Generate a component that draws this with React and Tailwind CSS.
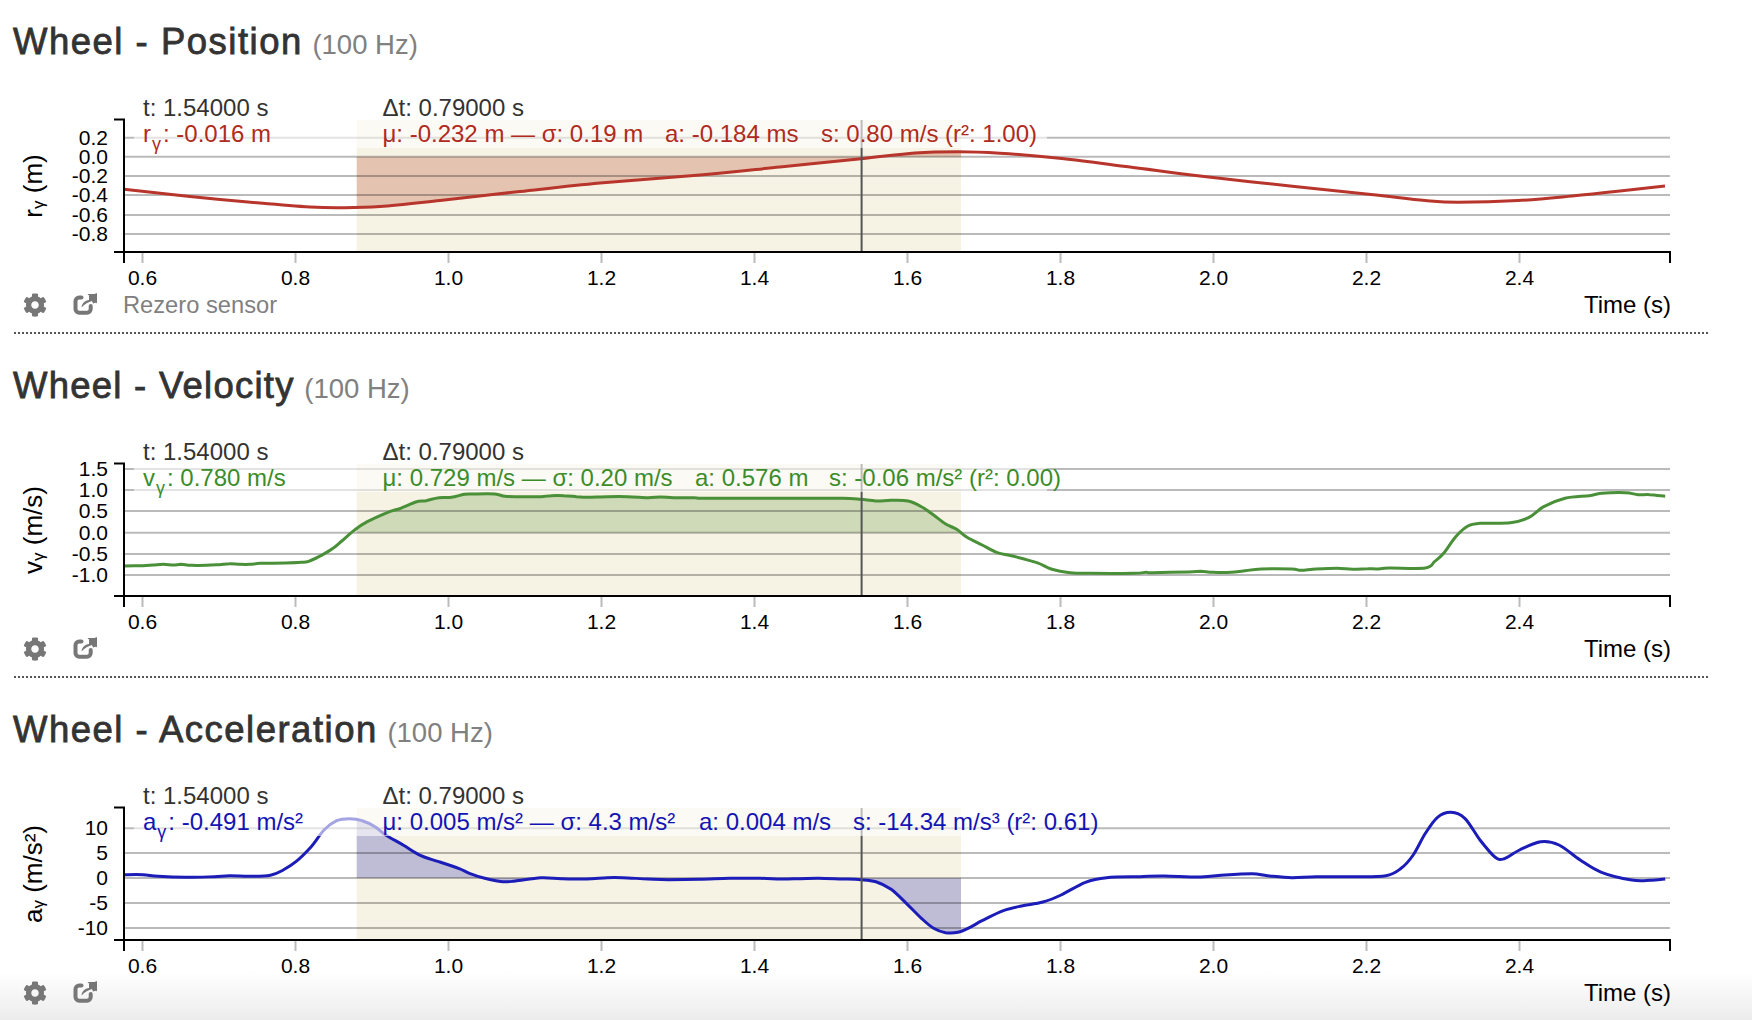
import React from "react";
import { FaCog } from "react-icons/fa";

const X0 = 142.5, PX = 765;
const xOf = (t) => X0 + (t - 0.6) * PX;
const TICKS = ["0.6", "0.8", "1.0", "1.2", "1.4", "1.6", "1.8", "2.0", "2.2", "2.4"];

const z = (list, kx, ox, oy) => list.map(([a, b]) => [ox + a / kx, oy + b / 3]);

const posPts = [
  [124, 189.3], [190, 196.5], [260, 203], [310, 207], [340, 207.8], [380, 206.6], [440, 200.5], [520, 191.5], [600, 183], [700, 175], [780, 167], [861, 158.7], [915, 153], [958, 151.7], [1000, 153.2], [1062, 158.5], [1130, 167], [1200, 176], [1290, 186], [1371, 194.5], [1425, 200.5], [1458, 202.3], [1518, 200.6], [1572, 196], [1620, 191], [1665, 186],
];
const velPts = [
  ...z([[243,678],[280,677],[300,675],[320,673],[340,675],[355,673],[375,676],[405,676],[430,674],[450,671],[470,673],[490,673],[510,670],[560,669],[590,667],[605,664],[625,650],[650,628],[670,603],[695,570],[720,545],[760,517],[785,505],[815,486],[835,482],[860,473],[885,472],[910,463],[930,462],[970,462],[990,469],[1020,470],[1060,470],[1080,467],[1105,467],[1130,470],[1150,472],[1190,470],[1230,470],[1270,473],[1295,471],[1320,473],[1360,473],[1380,475],[1500,475]], 1.96, 0, 340),
  ...z([[0,175],[70,175],[100,178],[125,183],[150,181],[178,183],[200,200],[220,225],[240,252],[258,268],[275,292],[300,315],[325,338],[350,348],[390,368],[415,388],[445,398],[480,400],[550,400],[570,397],[580,398],[640,396],[660,394],[680,397],[710,397],[730,393],[760,387],[810,387],[825,391],[850,387],[885,385],[910,388],[935,386],[950,387],[970,384],[1030,384],[1045,365],[1060,340],[1080,290],[1100,258],[1120,250],[1170,248],[1200,233],[1225,200],[1260,175],[1300,167],[1320,160],[1360,158],[1380,164],[1400,164],[1425,169]], 1.647, 800, 440),
];
const accPts = [
  ...z([[243,584],[280,584],[310,589],[365,592],[420,590],[450,587],[490,589],[530,586],[555,570],[580,545],[610,500],[635,450],[660,422],[685,416],[710,422],[735,440],[755,464],[790,495],[825,527],[860,545],[900,566],[920,580],[950,595],[985,605],[1010,603],[1060,593],[1100,596],[1150,597],[1190,593],[1220,593],[1270,597],[1310,599],[1370,598],[1430,595],[1490,595],[1530,597]], 1.96, 0, 680),
  ...z([[0,296],[30,295],[70,297],[100,299],[125,305],[150,328],[175,370],[200,415],[220,445],[240,458],[260,457],[280,442],[300,422],[335,392],[365,378],[400,366],[430,345],[470,307],[505,293],[560,290],[600,288],[660,291],[700,285],[745,281],[770,287],[810,293],[850,290],[910,290],[965,287],[990,265],[1010,225],[1030,160],[1050,112],[1072,97],[1095,115],[1120,180],[1145,232],[1160,236],[1185,210],[1220,185],[1250,195],[1285,240],[1320,277],[1370,300],[1400,301],[1425,297]], 1.647, 800, 780),
];

function smooth(p) {
  let d = `M${p[0][0].toFixed(1)} ${p[0][1].toFixed(1)}`;
  for (let i = 0; i < p.length - 1; i++) {
    const a = p[Math.max(i - 1, 0)], b = p[i], c = p[i + 1], e = p[Math.min(i + 2, p.length - 1)];
    const c1 = [b[0] + (c[0] - a[0]) / 6, b[1] + (c[1] - a[1]) / 6];
    const c2 = [c[0] - (e[0] - b[0]) / 6, c[1] - (e[1] - b[1]) / 6];
    d += `C${c1[0].toFixed(1)} ${c1[1].toFixed(1)} ${c2[0].toFixed(1)} ${c2[1].toFixed(1)} ${c[0].toFixed(1)} ${c[1].toFixed(1)}`;
  }
  return d;
}

function clipRange(pts, a, b) {
  const out = [];
  const lerp = (p, q, x) => [x, p[1] + ((q[1] - p[1]) * (x - p[0])) / (q[0] - p[0])];
  for (let i = 0; i < pts.length; i++) {
    const p = pts[i], q = pts[i + 1];
    if (p[0] >= a && p[0] <= b) out.push(p);
    if (q && p[0] < a && q[0] > a) out.push(lerp(p, q, a));
    if (q && p[0] < b && q[0] > b) out.push(lerp(p, q, b));
  }
  return out;
}

const Chart = ({ off, pts, grid, zero, color, stroke, area, yLabel, unit, values }) => {
  const hi0 = xOf(0.88), hi1 = xOf(1.67);
  const top = 120 + off, bot = 252 + off;
  const seg = clipRange(pts, hi0, hi1);
  const areaPath = `${smooth(seg)}L${hi1} ${zero}L${hi0} ${zero}Z`;
  return (
    <svg className="block h-[196px] w-[1752px]" viewBox={`0 ${96 + off} 1752 196`}>
      <rect x={hi0} y={top} width={hi1 - hi0} height={bot - top} fill="#f6f3e4" />
      <path d={areaPath} fill={area} />
      {grid.map(([y, label]) => (
        <g key={label}>
          <line x1="124" x2="1670" y1={y} y2={y} stroke="rgba(0,0,0,0.27)" strokeWidth="2" />
          <text x="108" y={y + 6.8} textAnchor="end" className="fill-black text-[21px]">{label}</text>
        </g>
      ))}
      {TICKS.map((t) => (
        <g key={t}>
          <line x1={xOf(+t)} x2={xOf(+t)} y1={bot} y2={bot + 11} stroke="#bbb" strokeWidth="2" />
          <text x={xOf(+t)} y={285 + off} textAnchor="middle" className="fill-black text-[21px]">{t}</text>
        </g>
      ))}
      <path d={smooth(pts)} fill="none" stroke={stroke} strokeWidth="3" strokeLinejoin="round" />
      <line x1={xOf(1.54)} x2={xOf(1.54)} y1={top} y2={bot} stroke="#555" strokeWidth="2" />
      <rect x="134" y={top} width="913" height="28" fill="rgba(255,255,255,0.6)" />
      <path d={`M114 ${119.5 + off}H124V${263 + off}M114 ${252 + off}H1670V${263 + off}`} fill="none" stroke="#000" strokeWidth="2" />
      <text transform={`translate(42 ${186 + off}) rotate(-90)`} textAnchor="middle" className="fill-black text-[26px]">
        {yLabel[0]}<tspan dy="2" className="text-[17px]">γ</tspan><tspan dy="-2"> {yLabel[1]}</tspan>
      </text>
      <text x="143" y={116 + off} className="fill-[#333] text-[24px]">t: 1.54000 s</text>
      <text x="382.5" y={116 + off} className="fill-[#333] text-[24px]">Δt: 0.79000 s</text>
      <text x="143" y={141.7 + off} fill={color} className="text-[24px]">
        {unit[0]}<tspan dy="8" dx="1" className="text-[18px]">γ</tspan><tspan dy="-8" dx="2">{unit[1]}</tspan>
      </text>
      <text y={141.7 + off} fill={color} className="text-[24px]">
        <tspan x="382.5">{values[0]}</tspan>
        <tspan x={values[1]}>{values[2]}</tspan>
        <tspan x={values[3]}>{values[4]}</tspan>
      </text>
    </svg>
  );
};

const ShareIcon = () => (
  <svg viewBox="0 0 24 22" className="h-[22px] w-[24px]" fill="none">
    <path d="M8.5 4.5H6.2A3.7 3.7 0 0 0 2.5 8.2V16A3.7 3.7 0 0 0 6.2 19.7H14A3.7 3.7 0 0 0 17.7 16V13" stroke="#777" strokeWidth="4" strokeLinecap="round" />
    <path d="M8.5 14.5C9 10 12 7.5 16 7V3L24 0V0L23.5 9.5L20 10.5L19 8C15.5 9 12 10.5 8.5 14.5Z" fill="#777" />
    <path d="M14.5 1H24V10.5Z" fill="#777" />
  </svg>
);

const Section = ({ name, titleClass, rezero, chart }) => (
  <section className="mb-[10px] h-[334px]">
    <h2 className={`h-[96px] whitespace-pre px-[13px] pt-[21px] text-[36.5px] leading-[42px] text-[#333] [-webkit-text-stroke:0.8px_#333] ${titleClass}`}>
      {name}
      <span className="ml-[2px] text-[27.5px] tracking-normal text-[#808080] [-webkit-text-stroke:0]"> (100 Hz)</span>
    </h2>
    {chart}
    <div className="ml-[14px] mr-[44px] flex h-[42px] items-start border-b-2 border-dotted border-[#555]">
      <FaCog className="mt-[1px] ml-[9px] h-[24px] w-[24px] text-[#777]" />
      <div className="ml-[26px] mt-[1px]"><ShareIcon /></div>
      {rezero && <span className="ml-[26px] mt-[-1px] text-[23.7px] leading-[28px] text-[#808080]">Rezero sensor</span>}
      <span className="ml-auto mr-[37px] mt-[-1px] text-[24px] leading-[28px] text-black">Time (s)</span>
    </div>
  </section>
);

export default function App() {
  return (
    <div className="h-[1020px] w-[1752px] overflow-hidden bg-[linear-gradient(to_bottom,#fff_972px,#ececec_1020px)] font-['Liberation_Sans',Arial,sans-serif]">
      <Section
        name="Wheel - Position"
        titleClass="tracking-[1.5px]"
        rezero
        chart={
          <Chart
            off={0}
            pts={posPts}
            zero={156.7}
            color="#b02a20"
            stroke="#b8352c"
            area="rgba(174,56,20,0.25)"
            grid={[[137.7, "0.2"], [156.7, "0.0"], [176, "-0.2"], [195, "-0.4"], [215, "-0.6"], [234, "-0.8"]]}
            yLabel={["r", "(m)"]}
            unit={["r", ": -0.016 m"]}
            values={["μ: -0.232 m — σ: 0.19 m", 665, "a: -0.184 ms", 821, "s: 0.80 m/s (r²: 1.00)"]}
          />
        }
      />
      <Section
        name="Wheel - Velocity"
        titleClass="tracking-[1.25px]"
        chart={
          <Chart
            off={344}
            pts={velPts}
            zero={532.7}
            color="#3c8c2a"
            stroke="#4a9038"
            area="rgba(90,144,52,0.25)"
            grid={[[469, "1.5"], [490, "1.0"], [511, "0.5"], [532.7, "0.0"], [554, "-0.5"], [575, "-1.0"]]}
            yLabel={["v", "(m/s)"]}
            unit={["v", ": 0.780 m/s"]}
            values={["μ: 0.729 m/s — σ: 0.20 m/s", 695, "a: 0.576 m", 829, "s: -0.06 m/s² (r²: 0.00)"]}
          />
        }
      />
      <Section
        name="Wheel - Acceleration"
        titleClass="tracking-[1.5px]"
        chart={
          <Chart
            off={688}
            pts={accPts}
            zero={878}
            color="#1414b4"
            stroke="#1c1cb8"
            area="rgba(26,24,172,0.25)"
            grid={[[828.3, "10"], [853, "5"], [878, "0"], [903, "-5"], [928, "-10"]]}
            yLabel={["a", "(m/s²)"]}
            unit={["a", ": -0.491 m/s²"]}
            values={["μ: 0.005 m/s² — σ: 4.3 m/s²", 699, "a: 0.004 m/s", 853, "s: -14.34 m/s³ (r²: 0.61)"]}
          />
        }
      />
    </div>
  );
}
